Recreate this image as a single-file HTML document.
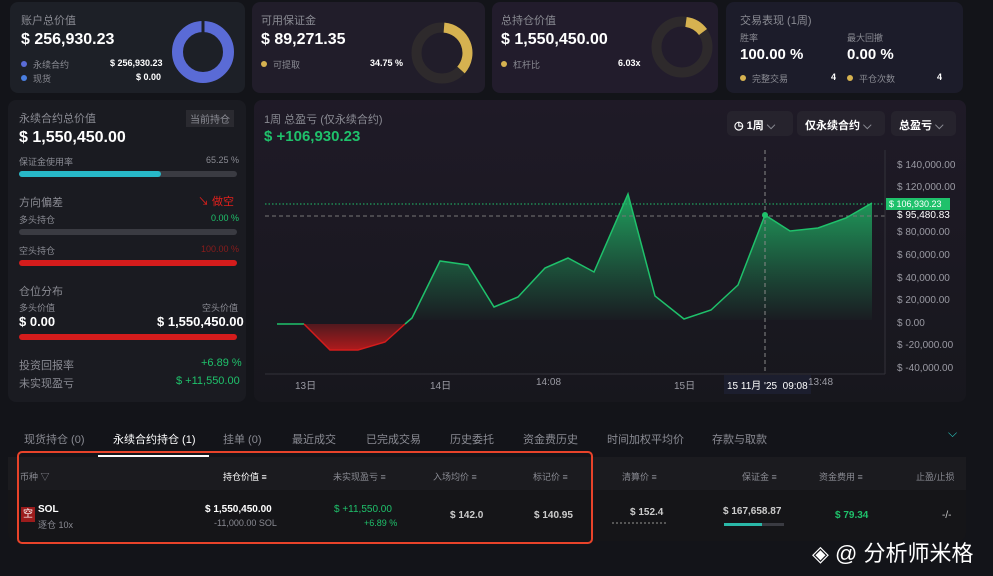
<!DOCTYPE html>
<html><head><meta charset="utf-8"><style>
*{margin:0;padding:0;box-sizing:border-box}
body{width:993px;height:576px;overflow:hidden;background:#131419;font-family:"Liberation Sans","Noto Sans CJK SC",sans-serif;color:#fff;position:relative}
.a{position:absolute;white-space:nowrap}
.card{position:absolute;border-radius:8px;background:#1d1e26}
.g{color:#8a8b93}
.lbl{font-size:11px;color:#8a8b93}
.big{font-size:16px;font-weight:bold}
.sm{font-size:9px}
.dot{display:inline-block;width:6px;height:6px;border-radius:50%;margin-right:6px;vertical-align:1px}
.bar{position:absolute;height:6px;border-radius:3px;background:#3a3b42}
.grn{color:#1fc16b}
.red{color:#e0201c}
.ax{font-size:10px;color:#9a9aa3;position:absolute;font-family:"Liberation Sans Narrow","Liberation Sans",sans-serif}
.th{font-size:9px;color:#8a8b93;position:absolute;top:470px}
</style></head><body>
<div class="card" style="left:10px;top:2px;width:235px;height:91px;background:#1d2027"></div>
<div class="a lbl" style="left:21px;top:12px">账户总价值</div>
<div class="a big" style="left:21px;top:31px">$ 256,930.23</div>
<div class="a sm g" style="left:21px;top:58px"><span class="dot" style="background:#5a6bd6"></span>永续合约</div>
<div class="a sm" style="left:110px;top:58px;font-weight:bold">$ 256,930.23</div>
<div class="a sm g" style="left:21px;top:72px"><span class="dot" style="background:#4a7ee0"></span>现货</div>
<div class="a sm" style="left:136px;top:72px;font-weight:bold">$ 0.00</div>
<svg class="a" style="left:172px;top:21px" width="62" height="62"><circle cx="31" cy="31" r="25.5" fill="none" stroke="#5a6bd6" stroke-width="11"/><line x1="31" y1="0" x2="31" y2="13" stroke="#1d2027" stroke-width="3"/></svg>

<div class="card" style="left:252px;top:2px;width:233px;height:91px;background:#211d2a"></div>
<div class="a lbl" style="left:261px;top:12px">可用保证金</div>
<div class="a big" style="left:261px;top:31px">$ 89,271.35</div>
<div class="a sm g" style="left:261px;top:58px"><span class="dot" style="background:#d6b250"></span>可提取</div>
<div class="a sm" style="left:370px;top:58px;font-weight:bold">34.75 %</div>
<svg class="a" style="left:411px;top:22px" width="62" height="62"><circle cx="31" cy="31" r="25.5" fill="none" stroke="#2e2a2c" stroke-width="10"/><path d="M33 5.6 A25.5 25.5 0 0 1 50 48" fill="none" stroke="#d6b250" stroke-width="10"/></svg>

<div class="card" style="left:492px;top:2px;width:226px;height:91px;background:#221c2c"></div>
<div class="a lbl" style="left:501px;top:12px">总持仓价值</div>
<div class="a big" style="left:501px;top:31px">$ 1,550,450.00</div>
<div class="a sm g" style="left:501px;top:58px"><span class="dot" style="background:#d6b250"></span>杠杆比</div>
<div class="a sm" style="left:618px;top:58px;font-weight:bold">6.03x</div>
<svg class="a" style="left:651px;top:16px" width="62" height="62"><circle cx="31" cy="31" r="25.5" fill="none" stroke="#2e2a2c" stroke-width="10"/><path d="M35 5.9 A25.5 25.5 0 0 1 52 16" fill="none" stroke="#d6b250" stroke-width="10"/></svg>

<div class="card" style="left:726px;top:2px;width:237px;height:91px;background:#1c1c2a"></div>
<div class="a lbl" style="left:740px;top:12px">交易表现 (1周)</div>
<div class="a sm g" style="left:740px;top:31px">胜率</div>
<div class="a sm g" style="left:847px;top:31px">最大回撤</div>
<div class="a big" style="left:740px;top:46px;font-size:15px">100.00 %</div>
<div class="a big" style="left:847px;top:46px;font-size:15px">0.00 %</div>
<div class="a sm g" style="left:740px;top:72px"><span class="dot" style="background:#d6b250"></span>完整交易</div>
<div class="a sm" style="left:831px;top:72px;font-weight:bold">4</div>
<div class="a sm g" style="left:847px;top:72px"><span class="dot" style="background:#d6b250"></span>平仓次数</div>
<div class="a sm" style="left:937px;top:72px;font-weight:bold">4</div>

<div class="card" style="left:8px;top:100px;width:238px;height:302px;background:#1a1b21"></div>
<div class="a lbl" style="left:19px;top:110px">永续合约总价值</div>
<div class="a sm g" style="left:186px;top:110px;background:#2a2a30;padding:1px 4px;font-size:10px">当前持仓</div>
<div class="a big" style="left:19px;top:129px">$ 1,550,450.00</div>
<div class="a sm g" style="left:19px;top:155px">保证金使用率</div>
<div class="a sm g" style="left:206px;top:155px">65.25 %</div>
<div class="bar" style="left:19px;top:171px;width:218px"></div>
<div class="bar" style="left:19px;top:171px;width:142px;background:#27b8c8"></div>
<div class="a lbl" style="left:19px;top:194px">方向偏差</div>
<div class="a red" style="left:198px;top:193px;font-size:11px">↘ 做空</div>
<div class="a sm g" style="left:19px;top:213px">多头持仓</div>
<div class="a sm grn" style="left:211px;top:213px">0.00 %</div>
<div class="bar" style="left:19px;top:229px;width:218px"></div>
<div class="a sm g" style="left:19px;top:244px">空头持仓</div>
<div class="a sm" style="left:201px;top:244px;color:#8a1c1c">100.00 %</div>
<div class="bar" style="left:19px;top:260px;width:218px;background:#d41c1c"></div>
<div class="a lbl" style="left:19px;top:283px">仓位分布</div>
<div class="a sm g" style="left:19px;top:301px">多头价值</div>
<div class="a sm g" style="left:202px;top:301px">空头价值</div>
<div class="a" style="left:19px;top:314px;font-size:13px;font-weight:bold">$ 0.00</div>
<div class="a" style="left:157px;top:314px;font-size:13px;font-weight:bold">$ 1,550,450.00</div>
<div class="bar" style="left:19px;top:334px;width:218px;background:#d41c1c"></div>
<div class="a lbl" style="left:19px;top:357px">投资回报率</div>
<div class="a grn" style="left:201px;top:357px;font-size:11px">+6.89 %</div>
<div class="a lbl" style="left:19px;top:375px">未实现盈亏</div>
<div class="a grn" style="left:176px;top:375px;font-size:11px">$ +11,550.00</div>

<div class="card" style="left:254px;top:100px;width:712px;height:302px;background:linear-gradient(#1f1a27,#17171d)"></div>
<div class="a lbl" style="left:264px;top:111px">1周 总盈亏 (仅永续合约)</div>
<div class="a grn" style="left:264px;top:128px;font-size:15px;font-weight:bold">$ +106,930.23</div>
<div class="a" style="left:727px;top:111px;width:66px;height:25px;border-radius:5px;background:#26232d;font-size:11px;font-weight:bold;padding:6px 7px">◷ 1周 <span class="g">⌵</span></div>
<div class="a" style="left:797px;top:111px;width:88px;height:25px;border-radius:5px;background:#26232d;font-size:11px;font-weight:bold;padding:6px 8px">仅永续合约 <span class="g">⌵</span></div>
<div class="a" style="left:891px;top:111px;width:65px;height:25px;border-radius:5px;background:#26232d;font-size:11px;font-weight:bold;padding:6px 8px">总盈亏 <span class="g">⌵</span></div>
<svg class="a" style="left:254px;top:100px" width="712" height="302">
<defs><linearGradient id="gg" x1="0" y1="0" x2="0" y2="1"><stop offset="0" stop-color="#1fc16b" stop-opacity=".8"/><stop offset=".6" stop-color="#1fc16b" stop-opacity=".3"/><stop offset="1" stop-color="#1fc16b" stop-opacity="0"/></linearGradient>
<linearGradient id="rg" x1="0" y1="0" x2="0" y2="1"><stop offset="0" stop-color="#d41c1c" stop-opacity=".3"/><stop offset="1" stop-color="#d41c1c" stop-opacity=".8"/></linearGradient></defs>
<g transform="translate(-254,-100)">
<path d="M405 324 L412 318 440 261 468 265 494 307 518 297 545 268 568 258 594 272 628 194 655 296 684 319 711 310 738 285 765 215 790 231 818 228 846 218 872 203 L872 320 L405 320Z" fill="url(#gg)"/>
<path d="M304 324 L330 350 358 350 385 342 405 324Z" fill="url(#rg)"/>
<line x1="265" y1="204" x2="885" y2="204" stroke="#1fc16b" stroke-dasharray="1.5 2" stroke-width="1"/>
<line x1="265" y1="216" x2="885" y2="216" stroke="#777" stroke-dasharray="4 3" stroke-width="1"/>
<line x1="765" y1="150" x2="765" y2="372" stroke="#888" stroke-dasharray="4 3" stroke-width="1"/>
<line x1="265" y1="374" x2="885" y2="374" stroke="#33323a"/>
<line x1="885" y1="150" x2="885" y2="374" stroke="#33323a"/>
<polyline points="277,324 304,324" fill="none" stroke="#1fc16b" stroke-width="1.5"/>
<polyline points="304,324 330,350 358,350 385,342 405,324" fill="none" stroke="#d41c1c" stroke-width="1.5"/>
<polyline points="405,324 412,318 440,261 468,265 494,307 518,297 545,268 568,258 594,272 628,194 655,296 684,319 711,310 738,285 765,215 790,231 818,228 846,218 872,203" fill="none" stroke="#1fc16b" stroke-width="1.5"/>
<circle cx="765" cy="215" r="3" fill="#1fc16b"/>
</g></svg>
<div class="ax" style="left:897px;top:160px">$ 140,000.00</div>
<div class="ax" style="left:897px;top:182px">$ 120,000.00</div>
<div class="a" style="left:886px;top:198px;background:#1fc16b;font-size:9px;padding:1px 3px;width:64px">$ 106,930.23</div>
<div class="ax" style="left:897px;top:210px;color:#fff">$ 95,480.83</div>
<div class="ax" style="left:897px;top:227px">$ 80,000.00</div>
<div class="ax" style="left:897px;top:250px">$ 60,000.00</div>
<div class="ax" style="left:897px;top:273px">$ 40,000.00</div>
<div class="ax" style="left:897px;top:295px">$ 20,000.00</div>
<div class="ax" style="left:897px;top:318px">$ 0.00</div>
<div class="ax" style="left:897px;top:340px">$ -20,000.00</div>
<div class="ax" style="left:897px;top:363px">$ -40,000.00</div>
<div class="ax" style="left:295px;top:377px">13日</div>
<div class="ax" style="left:430px;top:377px">14日</div>
<div class="ax" style="left:536px;top:377px">14:08</div>
<div class="ax" style="left:674px;top:377px">15日</div>
<div class="ax" style="left:724px;top:375px;background:#1c1e2e;color:#fff;padding:2px 3px">15 11月 '25 &nbsp;09:08</div>
<div class="ax" style="left:808px;top:377px">13:48</div>

<div class="a lbl" style="left:24px;top:431px">现货持仓 (0)</div>
<div class="a" style="left:113px;top:431px;font-size:11px">永续合约持仓 (1)</div>
<div class="a" style="left:98px;top:455px;width:111px;height:2px;background:#fff"></div>
<div class="a lbl" style="left:223px;top:431px">挂单 (0)</div>
<div class="a lbl" style="left:292px;top:431px">最近成交</div>
<div class="a lbl" style="left:366px;top:431px">已完成交易</div>
<div class="a lbl" style="left:450px;top:431px">历史委托</div>
<div class="a lbl" style="left:523px;top:431px">资金费历史</div>
<div class="a lbl" style="left:607px;top:431px">时间加权平均价</div>
<div class="a lbl" style="left:712px;top:431px">存款与取款</div>
<div class="a" style="left:948px;top:426px;color:#2ac9c0;font-size:12px">⌵</div>
<div class="a" style="left:8px;top:457px;width:958px;height:84px;border-radius:0 0 8px 8px;background:#151518"></div>
<div class="a" style="left:8px;top:457px;width:958px;height:33px;background:#1b1b1f"></div>
<div class="th" style="left:20px">币种 ▽</div>
<div class="th" style="left:223px;color:#fff">持仓价值 ≡</div>
<div class="th" style="left:333px">未实现盈亏 ≡</div>
<div class="th" style="left:433px">入场均价 ≡</div>
<div class="th" style="left:533px">标记价 ≡</div>
<div class="th" style="left:622px">清算价 ≡</div>
<div class="th" style="left:742px">保证金 ≡</div>
<div class="th" style="left:819px">资金费用 ≡</div>
<div class="th" style="left:916px">止盈/止损</div>
<div class="a" style="left:21px;top:507px;width:14px;height:15px;background:#9b1c1c;font-size:10px;text-align:center;line-height:15px">空</div>
<div class="a" style="left:38px;top:504px;font-size:10px;font-weight:bold">SOL</div>
<div class="a sm g" style="left:38px;top:518px">逐仓 10x</div>
<div class="a" style="left:205px;top:504px;font-size:10px;font-weight:bold">$ 1,550,450.00</div>
<div class="a sm g" style="left:214px;top:518px">-11,000.00 SOL</div>
<div class="a grn" style="left:334px;top:504px;font-size:10px">$ +11,550.00</div>
<div class="a grn sm" style="left:364px;top:518px">+6.89 %</div>
<div class="a" style="left:450px;top:510px;font-size:10px;color:#ccc;font-weight:bold">$ 142.0</div>
<div class="a" style="left:534px;top:510px;font-size:10px;color:#ccc;font-weight:bold">$ 140.95</div>
<div class="a" style="left:630px;top:507px;font-size:10px;color:#ccc;font-weight:bold">$ 152.4</div>
<div class="a" style="left:612px;top:522px;width:54px;border-top:2px dotted #555"></div>
<div class="a" style="left:723px;top:506px;font-size:10px;color:#ccc;font-weight:bold">$ 167,658.87</div>
<div class="a" style="left:724px;top:523px;width:60px;height:3px;background:#3a3b42"></div>
<div class="a" style="left:724px;top:523px;width:38px;height:3px;background:#2ab8a8"></div>
<div class="a grn" style="left:835px;top:510px;font-size:10px;font-weight:bold">$ 79.34</div>
<div class="a" style="left:942px;top:510px;font-size:10px;color:#ccc">-/-</div>
<div class="a" style="left:17px;top:451px;width:576px;height:93px;border:2px solid #e8432a;border-radius:5px"></div>
<div class="a" style="left:812px;top:536px;font-size:22px;color:#fff">◈ @ 分析师米格</div>
</body></html>
